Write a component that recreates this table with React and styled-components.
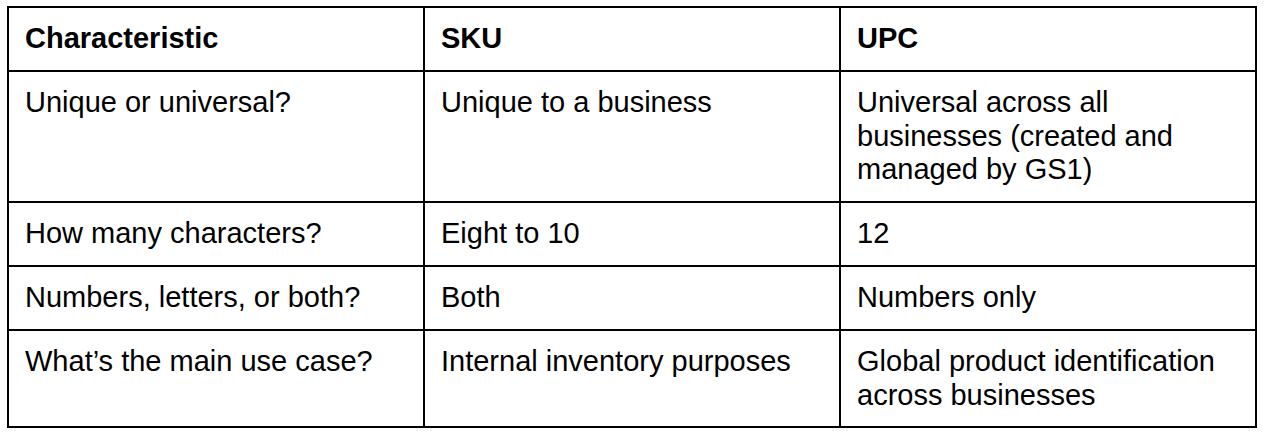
import React from "react";
import styled, { createGlobalStyle } from "styled-components";

const GlobalStyle = createGlobalStyle`
  html, body {
    margin: 0;
    padding: 0;
    background: #fff;
  }
  body {
    font-family: "Liberation Sans", Arial, sans-serif;
    color: #000;
  }
`;

const Table = styled.div`
  display: grid;
  grid-template-columns: repeat(3, 416px);
  width: 1250px;
  margin: 6px 0 0 7px;
  border-top: 2px solid #000;
  border-left: 2px solid #000;
  box-sizing: border-box;
`;

const Cell = styled.div`
  box-sizing: border-box;
  border-right: 2px solid #000;
  border-bottom: 2px solid #000;
  padding: 14px 15px 14px 16px;
  font-size: 29px;
  line-height: 33.8px;
  font-weight: ${(p) => (p.$head ? 700 : 400)};
`;

const rows = [
  ["Characteristic", "SKU", "UPC"],
  [
    "Unique or universal?",
    "Unique to a business",
    "Universal across all businesses (created and managed by GS1)",
  ],
  ["How many characters?", "Eight to 10", "12"],
  ["Numbers, letters, or both?", "Both", "Numbers only"],
  [
    "What\u2019s the main use case?",
    "Internal inventory purposes",
    "Global product identification across businesses",
  ],
];

export default function App() {
  return (
    <>
      <GlobalStyle />
      <Table>
        {rows.map((row, i) =>
          row.map((text, j) => (
            <Cell key={`${i}-${j}`} $head={i === 0}>
              {text}
            </Cell>
          ))
        )}
      </Table>
    </>
  );
}
